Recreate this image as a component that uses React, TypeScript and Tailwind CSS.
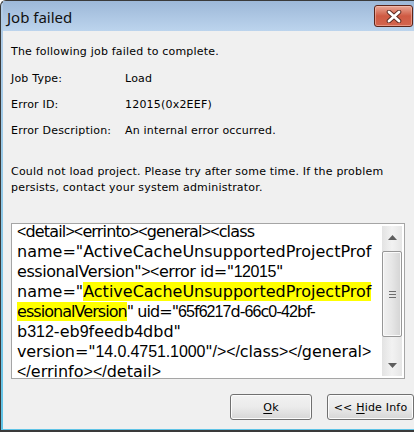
import React from "react";

const dlg = { fontFamily: '"DejaVu Sans", Tahoma, sans-serif' };
const mono = { fontFamily: '"DejaVu Sans", sans-serif' };
const narrow = { fontFamily: '"Liberation Sans", Arial, sans-serif' };

// brackets, digits and slashes are narrower in the original font
function Mix({ text }: { text: string }) {
  const parts = text.split(/([<>\/0-9.]+)/).filter(Boolean);
  return (
    <>
      {parts.map((p, i) =>
        /^[<>\/0-9.]+$/.test(p) ? (
          <span key={i} style={narrow}>
            {p}
          </span>
        ) : (
          <React.Fragment key={i}>{p}</React.Fragment>
        )
      )}
    </>
  );
}

function CloseButton() {
  return (
    <div className="mr-[7px] flex h-[22px] w-[39px] items-center justify-center rounded-[3px] border border-[#5b2419] bg-gradient-to-b from-[#e8a797] via-[#cf5a43] to-[#d3654e] shadow-[inset_0_0_0_1px_rgba(255,210,200,0.45)]">
      <svg width="16" height="13" viewBox="0 0 16 13">
        <path
          d="M3 2 L13 11 M13 2 L3 11"
          stroke="#5a2a22"
          strokeWidth="4.6"
          strokeLinecap="round"
        />
        <path
          d="M3 2 L13 11 M13 2 L3 11"
          stroke="#ffffff"
          strokeWidth="2.8"
          strokeLinecap="round"
        />
      </svg>
    </div>
  );
}

function Btn({
  width,
  children,
}: {
  width: string;
  children: React.ReactNode;
}) {
  return (
    <div
      className={`${width} flex h-[26px] items-center justify-center rounded-[3px] border border-[#707070] bg-gradient-to-b from-[#f2f2f2] via-[#ebebeb] to-[#d6d6d6] text-[11px] leading-[13px] tracking-[0.2px] text-black shadow-[inset_0_0_0_1px_#fcfcfc]`}
      style={dlg}
    >
      {children}
    </div>
  );
}

function ScrollBar() {
  return (
    <div className="my-[2px] mr-[2px] flex w-[20px] flex-col bg-gradient-to-r from-[#e3e3e3] via-[#f2f2f2] to-[#e6e6e6]">
      <div className="flex h-[22px] items-center justify-center">
        <svg width="9" height="5" viewBox="0 0 9 5">
          <path d="M0 5 L4.5 0 L9 5 Z" fill="#5e5e5e" />
        </svg>
      </div>
      <div className="mt-[3px] flex h-[86px] flex-col items-center justify-center gap-[2px] rounded-[2px] border border-[#979797] bg-gradient-to-r from-[#f1f1f1] via-[#e6e6e6] to-[#d4d4d4] shadow-[inset_0_0_0_1px_#fafafa]">
        <div className="h-px w-[7px] bg-[#6d6d6d]" />
        <div className="h-px w-[7px] bg-[#6d6d6d]" />
        <div className="h-px w-[7px] bg-[#6d6d6d]" />
      </div>
      <div className="flex-1" />
      <div className="flex h-[22px] items-center justify-center">
        <svg width="9" height="5" viewBox="0 0 9 5">
          <path d="M0 0 L9 0 L4.5 5 Z" fill="#5e5e5e" />
        </svg>
      </div>
    </div>
  );
}

export default function App() {
  const hl = "bg-[#ffff00]";
  return (
    <div className="h-[432px] w-[414px] overflow-hidden bg-white">
      <div className="flex h-[432px] w-[420px] flex-col rounded-tl-[6px] border-l border-t border-b-2 border-[#3a3a3a] bg-gradient-to-b from-[#b4cce7] to-[#5ec3e6] pb-px pl-[2px]">
        {/* Title bar */}
        <div className="flex h-[30px] items-center justify-between bg-gradient-to-b from-[#9db8d8] to-[#bcd4ed]">
          <span
            className="pl-[4px] pt-[1px] text-[15px] leading-[20px] text-[#111]"
            style={{ fontFamily: '"Noto Sans", "Open Sans", sans-serif' }}
          >
            Job failed
          </span>
          <CloseButton />
        </div>

        {/* Body */}
        <div
          className="flex flex-1 flex-col bg-[#f0f0f0] pl-[8px] pr-[6px] text-[11px] leading-[13px] tracking-[0.2px] text-black"
          style={dlg}
        >
          <div className="mt-[14px]">The following job failed to complete.</div>
          <div className="mt-[14px] flex">
            <span className="w-[114px]">Job Type:</span>
            <span>Load</span>
          </div>
          <div className="mt-[13px] flex">
            <span className="w-[114px]">Error ID:</span>
            <span>12015(0x2EEF)</span>
          </div>
          <div className="mt-[13px] flex">
            <span className="w-[114px]">Error Description:</span>
            <span>An internal error occurred.</span>
          </div>
          <div className="mt-[27px] leading-[16px]">
            Could not load project. Please try after some time. If the problem
            <br />
            persists, contact your system administrator.
          </div>

          {/* Detail box */}
          <div className="mt-[27px] flex h-[156px] w-[394px] border border-[#a5a5a5] bg-white">
            <div
              className="flex-1 overflow-hidden whitespace-pre pl-[5px] text-[16px] leading-[20px] tracking-normal text-black"
              style={mono}
            >
              <div className="-mt-[2px]">
                <div className="tracking-[-0.85px]">
                  <Mix text="<detail><errinto><general><class" />
                </div>
                <div>{'name="ActiveCacheUnsupportedProjectProf'}</div>
                <div className="tracking-[-0.45px]">
                  <Mix text={'essionalVersion"><error id="12015"'} />
                </div>
                <div>
                  {'name="'}
                  <span className={hl}>ActiveCacheUnsupportedProjectProf</span>
                </div>
                <div className="tracking-[-0.95px]">
                  <span className={hl}>essionalVersion</span>
                  <Mix text={'" uid="65f6217d-66c0-42bf-'} />
                </div>
                <div>
                  <Mix text={'b312-eb9feedb4dbd"'} />
                </div>
                <div className="tracking-[-0.1px]">
                  <Mix text={'version="14.0.4751.1000"/></class></general>'} />
                </div>
                <div>
                  <Mix text="</errinfo></detail>" />
                </div>
              </div>
            </div>
            <ScrollBar />
          </div>

          {/* Buttons */}
          <div className="mt-[15px] flex justify-end gap-[15px]">
            <Btn width="w-[82px]">
              <span>
                <u className="underline-offset-[2px]">O</u>k
              </span>
            </Btn>
            <Btn width="w-[87px]">
              <span>
                {"<< "}
                <u className="underline-offset-[2px]">H</u>ide Info
              </span>
            </Btn>
          </div>
        </div>
      </div>
    </div>
  );
}
